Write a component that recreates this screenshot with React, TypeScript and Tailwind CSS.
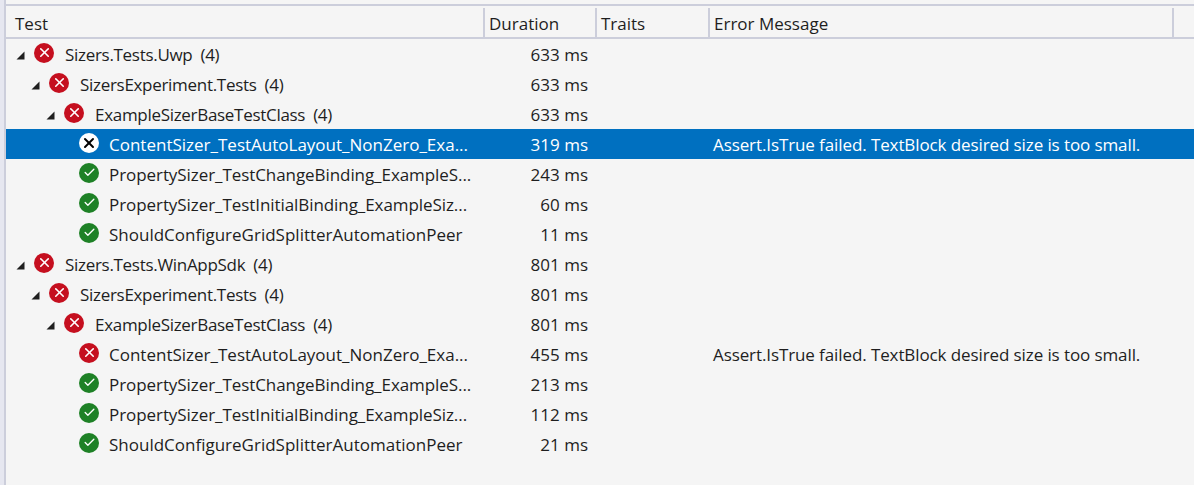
import { Check, X } from "lucide-react";

type Row = { depth: number; name: string; count?: boolean; tight?: boolean; ms: string; ok?: boolean; error?: string; selected?: boolean };

const errorText = "Assert.IsTrue failed. TextBlock desired size is too small.";

const rows: Row[] = [
  { depth: 0, name: "Sizers.Tests.Uwp", count: true, ms: "633 ms" },
  { depth: 1, name: "SizersExperiment.Tests", count: true, ms: "633 ms" },
  { depth: 2, name: "ExampleSizerBaseTestClass", count: true, ms: "633 ms" },
  { depth: 3, name: "ContentSizer_TestAutoLayout_NonZero_Exa...", ms: "319 ms", error: errorText, selected: true },
  { depth: 3, name: "PropertySizer_TestChangeBinding_ExampleS...", tight: true, ms: "243 ms", ok: true },
  { depth: 3, name: "PropertySizer_TestInitialBinding_ExampleSiz...", tight: true, ms: "60 ms", ok: true },
  { depth: 3, name: "ShouldConfigureGridSplitterAutomationPeer", ms: "11 ms", ok: true },
  { depth: 0, name: "Sizers.Tests.WinAppSdk", count: true, ms: "801 ms" },
  { depth: 1, name: "SizersExperiment.Tests", count: true, ms: "801 ms" },
  { depth: 2, name: "ExampleSizerBaseTestClass", count: true, ms: "801 ms" },
  { depth: 3, name: "ContentSizer_TestAutoLayout_NonZero_Exa...", ms: "455 ms", error: errorText },
  { depth: 3, name: "PropertySizer_TestChangeBinding_ExampleS...", tight: true, ms: "213 ms", ok: true },
  { depth: 3, name: "PropertySizer_TestInitialBinding_ExampleSiz...", tight: true, ms: "112 ms", ok: true },
  { depth: 3, name: "ShouldConfigureGridSplitterAutomationPeer", ms: "21 ms", ok: true },
];

const depthPad = ["pl-[10px]", "pl-[25px]", "pl-[40px]", "pl-[73px]"];

function StatusIcon({ ok, selected }: { ok?: boolean; selected?: boolean }) {
  if (selected) {
    return (
      <span className="flex h-5 w-5 shrink-0 items-center justify-center rounded-full bg-white">
        <X size={16} strokeWidth={3} className="text-black" />
      </span>
    );
  }
  return (
    <span className={`flex h-5 w-5 shrink-0 items-center justify-center rounded-full ${ok ? "bg-[#1e8126]" : "bg-[#c50f1f]"}`}>
      {ok ? <Check size={13} strokeWidth={2.5} className="text-white" /> : <X size={15} strokeWidth={2.5} className="text-white" />}
    </span>
  );
}

function HeaderCell({ label, className }: { label: string; className: string }) {
  return <div className={`flex h-full items-center truncate border-r-2 border-[#ccceDB] pt-[2px] ${className}`}>{label}</div>;
}

function TestRow({ row }: { row: Row }) {
  const expandable = row.depth < 3;
  return (
    <div className={`flex h-[30px] items-center pt-[2px] ${row.selected ? "bg-[#0070c0] text-white" : "text-[#1e1e1e]"}`}>
      <div className={`flex w-[478px] shrink-0 items-center ${depthPad[row.depth]}`}>
        {expandable && (
          <svg width="9" height="9" viewBox="0 0 9 9" className="mr-[9px] shrink-0">
            <path d="M8.5 0.5V8.5H0.5Z" fill="#1e1e1e" />
          </svg>
        )}
        <div className="-mt-[5px]">
          <StatusIcon ok={row.ok} selected={row.selected} />
        </div>
        {row.count ? (
          <span className="ml-[11px] whitespace-pre tracking-[-0.3px]">
            {row.name}
            <span className="ml-[8px]">(4)</span>
          </span>
        ) : (
          <span className={`ml-[10px] whitespace-pre ${row.tight ? "tracking-[-0.07px]" : ""}`}>{row.name}</span>
        )}
      </div>
      <div className="w-[104px] shrink-0 text-right">{row.ms}</div>
      <div className="ml-[125px] whitespace-pre tracking-[-0.1px]">{row.error}</div>
    </div>
  );
}

export default function App() {
  return (
    <div className="h-[485px] w-[1194px] overflow-hidden bg-[#f5f5f5] font-['Open_Sans',sans-serif] text-[17px] leading-[24px]">
      <div className="flex h-full border-l-[4px] border-[#e6e7f0]">
        <div className="h-full flex-1 border-l-2 border-[#ccceDB]">
          <div className="h-[6px] border-b-2 border-[#ccceDB]" />
          <div className="flex h-[33px] items-stretch border-b-2 border-[#ccceDB] pt-[2px] text-[#1e1e1e]">
            <HeaderCell label="Test" className="w-[479px] pl-[9px]" />
            <HeaderCell label="Duration" className="w-[112px] pl-[4px]" />
            <HeaderCell label="Traits" className="w-[113px] pl-[4px]" />
            <HeaderCell label="Error Message" className="w-[464px] pl-[4px]" />
          </div>
          <div>
            {rows.map((row, i) => (
              <TestRow key={i} row={row} />
            ))}
          </div>
        </div>
      </div>
    </div>
  );
}
